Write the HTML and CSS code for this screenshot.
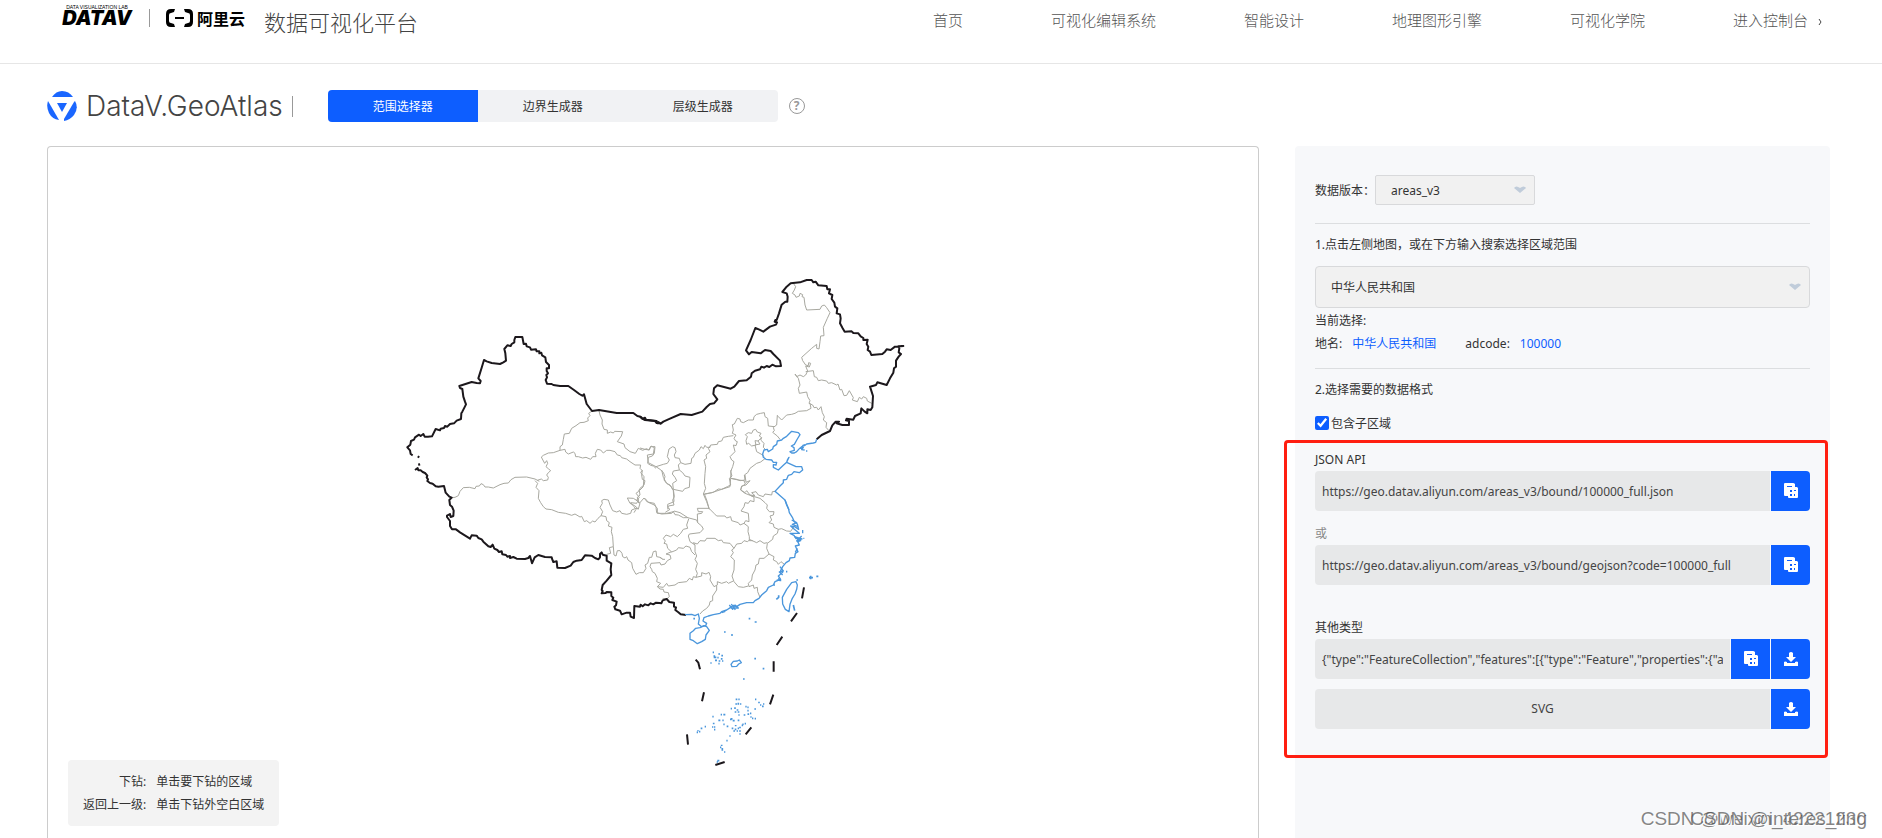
FILE: index.html
```html
<!DOCTYPE html>
<html lang="zh-CN">
<head>
    <meta charset="UTF-8">
    <meta name="viewport" content="width=device-width, initial-scale=1.0">
    <title>DataV.GeoAtlas地理小工具系列</title>
    <link rel="stylesheet" href="styles.css">
</head>
<body>
<header class="site-header">
    <div class="brand">
        <div class="datav-logo">
            <span class="datav-sub">DATA VISUALIZATION LAB</span>
            <span class="datav-name">DATAV</span>
        </div>
        <span class="brand-split"></span>
        <div class="aliyun-logo">
            <svg width="30" height="18" viewBox="0 0 30 18" aria-hidden="true">
                <path d="M10 0H6Q1 0 1 5V13Q1 18 6 18H10L9 15L6 14Q4 14 4 12V6Q4 4 6 4L9 3Z"/>
                <path d="M19 0H23Q28 0 28 5V13Q28 18 23 18H19L20 15L23 14Q25 14 25 12V6Q25 4 23 4L20 3Z"/>
                <path d="M10 8H19V10H10Z"/>
            </svg>
            <span>阿里云</span>
        </div>
        <span class="brand-title">数据可视化平台</span>
    </div>
    <nav class="site-nav">
        <a href="#">首页</a>
        <a href="#">可视化编辑系统</a>
        <a href="#">智能设计</a>
        <a href="#">地理图形引擎</a>
        <a href="#">可视化学院</a>
        <a href="#">进入控制台<svg class="nav-arrow" width="4" height="8" viewBox="0 0 4 8" aria-hidden="true"><path d="M1 1L3 4L1 7"/></svg></a>
    </nav>
</header>

<div class="toolbar">
    <h1 class="product">
        <svg width="30" height="30" viewBox="0 0 30 30" aria-hidden="true">
            <path d="M5 6Q9 0 15 0Q22 0 26 6Z"/>
            <path d="M1 10L12 29Q5 28 2 22Q-1 16 1 10Z"/>
            <path d="M28 10Q32 17 27 24Q23 29 17 30L17 28L27 11Z"/>
            <path d="M10 12H20L15 21Z"/>
        </svg>
        <span>DataV.GeoAtlas</span>
    </h1>
    <div class="tabs">
        <button class="tab active" type="button">范围选择器</button>
        <button class="tab" type="button">边界生成器</button>
        <button class="tab" type="button">层级生成器</button>
    </div>
    <button class="help" type="button" aria-label="帮助">?</button>
</div>

<main class="workspace">
    <section class="map-box">
        <!-- 三倍坐标系，原点为地图左上角 -->
        <svg class="map" viewBox="-6 0 1530 1500" role="img" aria-label="中国地图">
            <!-- 省界 -->
            <g class="province">
                <path d="M576 423L566 430L570 437L563 444L565 452L552 457L540 458L528 467L515 475L508 490L493 492L490 508L487 525L480 530V541"/>
                <path d="M480 541L460 548L445 549L430 556L424 561L427 567L434 580L440 572L443 580L438 590L446 597L452 602L445 608L440 615L445 622L443 630L430 632L424 627L412 631"/>
                <path d="M418 634L405 627L380 621L345 622L333 629L325 639L312 640L300 644L280 654L265 651L255 651L250 644L243 641L238 648L228 649L225 656L208 652L190 653L180 664L175 677L165 682L155 683"/>
                <path d="M480 541L495 538L497 546L505 552L520 546L525 550L527 560L535 560L548 564L558 562L572 568L578 560L588 560L586 550L592 538L602 540L610 549L620 541L630 541L645 545L652 555L661 557L665 563L680 567L690 575L705 585L722 585L720 595L727 602L725 615L727 628L735 632L732 645L720 655L715 665L708 670L718 682L710 690L720 700L715 717"/>
                <path d="M405 632L413 640L408 652L417 662L415 685L422 698L430 710L438 717L455 719L475 727L497 730L515 736L525 732L540 741L545 739L553 755L560 752L570 760L578 753L585 756L594 745L603 737"/>
                <path d="M603 737L608 725L600 712L607 700L605 692L612 688L625 690L630 705L638 722L650 726L660 722L665 730L680 733L692 730L695 720L708 715L715 717L704 707L690 700L682 684L700 685L708 690L718 700L732 684L742 696L763 700L768 712L770 728L785 732L815 730L822 723L840 728L865 744"/>
                <path d="M603 737L618 740L620 752L628 758L625 768L636 772L634 785L638 800L640 830L628 833L632 850L620 853"/>
                <path d="M640 830L642 855L648 858L652 842L660 842L666 850L668 860L675 864L680 860L684 870L695 878L698 895L708 913L718 908L730 908L738 895L735 885L743 880L748 862L755 862L760 845L768 843L770 860L780 862L788 867"/>
                <path d="M597 422L600 435L607 450L606 462L612 478L622 480L622 490L632 486L640 489L644 484L668 485L664 498L652 515L672 522L675 533L690 545L706 550L715 535L728 541L740 536L746 540L752 530L765 530L763 550L757 558L745 562L743 580L752 586L760 588L768 595"/>
            </g>
            <g class="province" transform="translate(720 0)">
                <path d="M460 40L467 50L463 60L457 70L465 75L468 82L478 78L480 70L488 74L486 80L492 82L495 105L500 120L540 118L545 108L553 105L560 113L570 128L562 145L550 172L552 197L542 198L540 215L537 237L530 235L530 223L515 235L485 262L488 272L497 285L505 287L506 278L512 280L508 291L497 288L503 303"/>
                <path d="M497 305L520 302L523 320L530 322L535 332L545 330L560 333L565 340L575 338L590 345L594 342L600 360L605 358L612 377L620 376L628 362L640 383L637 390L652 395L658 382L665 387L670 380L680 385L682 393L695 400"/>
                <path d="M503 303L497 315L490 320L480 315L470 320L465 312L475 325L480 345L475 355L478 370L500 366L503 380L510 392L507 400L518 405L522 413L530 412L535 420L543 410L547 428L553 440L550 450L560 458L558 472L565 480"/>
                <path d="M510 400L513 415L500 422L475 424L465 430L455 433L440 435L425 450L415 440L412 436L410 465L400 472L403 482L398 487L412 498L420 508"/>
                <path d="M403 470L385 468L383 445L375 440L373 428L362 430L350 433L342 440L340 450L325 450L310 458L302 455L300 447L292 445L283 462L277 464L280 480L277 490L288 495L282 505L287 513L292 515L288 527L280 525L285 545L270 560L275 570L282 575L278 590L272 605L276 618L268 625L272 645L262 650L245 658L235 657L220 667L192 673"/>
                <path d="M280 497L265 499L250 502L245 513L235 515L232 523L212 525L208 532L200 532L195 526L190 536L183 530L178 540L165 550L160 562L155 565L153 580L135 583L122 578L118 565L105 563L103 555L108 545L105 533L98 530L87 537L82 560L88 570L82 580L70 583L48 590L25 578L22 555L40 552L43 533L33 528L28 540L15 538L0 534"/>
                <path d="M48 590L60 598L70 607L75 620L72 630L80 640L90 645L98 657"/>
                <path d="M122 578L115 585L118 600L100 603L97 612L105 622L110 632L98 640L100 658L128 664L134 656L148 652L150 622L135 618L128 608L118 600"/>
                <path d="M212 530L205 535L210 545L198 555L200 565L192 570L197 590L195 610L193 640L197 655L190 672L200 695L208 718"/>
                <path d="M272 625L290 628L300 632L315 630L313 615L323 608L330 595L350 580L362 576L375 566"/>
                <path d="M315 615L318 637L330 632L318 645L305 648L302 660L315 668L320 662L330 675L345 677L335 668L348 665L355 675L370 680L375 672L395 675L397 665L407 664"/>
                <path d="M318 512L322 500L316 494L325 488L335 490L340 480L347 478L352 486L363 490L358 498L365 503L354 513L345 512L348 525L335 528L326 520L320 523Z"/>
                <path d="M354 513L360 522L345 525L350 545L368 555L372 560M365 503L362 510L372 520L370 532L378 540"/>
                <path d="M100 658L103 680L98 690L102 705L85 708L83 718"/>
            </g>
            <g class="province" transform="translate(480 600)">
                <path d="M235 90L230 100L212 98L222 110L228 118L222 128M235 90L233 82M255 85L265 97L283 105L292 115V130L320 130L340 125L345 134L355 135L370 143L383 143L410 150L413 158"/>
                <path d="M247 0L242 8L252 20L250 50L238 62L240 75L232 82L237 98"/>
                <path d="M305 0L310 22L320 40L332 48L340 62L342 95L323 103V113L330 118L316 127"/>
                <path d="M447 115L412 115L415 125L428 125L425 130L412 132L413 158L425 168L430 177L420 188L388 192L385 198L390 215L405 225"/>
                <path d="M433 72L440 90L447 115L462 130L470 138L495 138L500 144L512 140L515 152L535 158L540 165L552 160L565 170L564 185L568 200L568 212L578 212"/>
                <path d="M386 147L380 165L383 175L370 178L362 190L352 200L340 193L332 200L318 195L310 205L316 213L312 220L320 222L323 235L335 246L350 240L355 233L370 235L378 228L390 232L395 245L405 255"/>
                <path d="M405 225L400 218L412 222L420 212L435 213L440 205L465 205L475 212L485 210L490 218L510 220L522 235L530 222L545 220L552 212L562 215L570 209L590 218L600 212L612 220L622 218"/>
                <path d="M552 160L557 152L567 155L565 130L543 123L552 110L555 98L565 100L570 92L582 95L582 82L573 77"/>
                <path d="M433 72L455 68L485 58L510 50L512 25L513 0M512 25L535 30L552 32L556 42L545 50L542 60L555 70L573 77"/>
                <path d="M573 77L600 85L615 98L622 105L620 115L628 125L642 125L640 135L630 138L635 150L627 158L640 162L642 172L655 178L665 176L680 183L692 184L705 165"/>
                <path d="M655 178L652 190L640 198L638 208L622 220L620 235L627 252L642 260L640 270L650 275L655 283L663 275L672 282"/>
                <path d="M627 252L612 265L598 265L595 282L588 285L585 300L577 315L575 330L565 340L567 350L580 345L582 355L592 352L593 365L600 382"/>
                <path d="M522 235L515 240L520 248L512 260L523 270L522 300L516 318L522 335L535 350L550 352L565 348"/>
                <path d="M405 225V245L410 258L405 268L412 280L407 298L412 310L408 322L400 320L397 330L388 325L380 335L355 338L345 345L325 348L320 340L310 352L292 350L302 340L290 335L292 325L285 310L277 305L275 298L270 290L273 280L300 278L303 285L315 282L322 272L333 266L330 255L318 252L335 245"/>
                <path d="M408 322L425 318L425 308L438 312L447 307L452 320L450 330L462 350L472 345L472 335L485 340L500 335L505 340L520 333"/>
                <path d="M292 350L300 357L310 358L312 366L325 368L328 380L320 387L308 385"/>
                <path d="M470 347L470 360L458 378L458 392L450 395L448 405L440 415L428 423L420 432"/>
                <path d="M300 262L308 268L315 268"/>
            </g>
            <!-- 国界 -->
            <g class="border">
                <path d="M782 460L772 460L770 453L738 449L735 443L728 446L722 440L712 438L700 429L650 429L597 420L576 423L560 402L552 373L547 377L538 372L522 360L505 348L480 348L460 345L455 342L441 341L437 330L441 322L439 315L444 310L440 303L440 295L447 295V285L438 276L436 262L426 256L424 248L418 250V244L410 244L408 238L393 239L390 232L380 229L378 221L371 222L367 201L346 201L343 210L343 217L335 222L332 228L322 226L313 237L316 250L318 272L310 277L300 282L275 279L260 274L252 270L245 293L235 325L242 333L240 340L230 339L215 336L178 348L180 354L187 357L190 380L195 395L198 403L192 415L187 425L184 430L183 447L170 452L162 460L150 462L142 470L135 468L132 474L122 476L120 481L107 477L96 499L84 500L74 500L70 492L62 498L57 494L45 502L42 509L33 513L31 524L22 532L30 541L32 552L38 556"/>
                <path d="M53 559L58 562M57 580L58 587M45 600L53 594L55 601L62 601L68 606L75 609L82 617L80 622L84 628L82 633L90 639L98 641L107 649L115 650L132 648L137 668L148 680L155 683L148 690L150 705L156 710L161 722L160 738L152 741L150 732L141 737L141 741L150 753L150 768L156 778L168 778L180 787L210 806L215 796L230 797L235 804L245 808L250 815L265 829L272 831L278 824L283 836L292 840L297 846L305 844L307 853L318 855L322 860L330 858V864L340 861L350 866L375 867L385 864L390 858L396 880L404 862L415 855L435 861L455 862L457 869L460 876L470 874L472 893L495 894L512 887L520 876L530 872L545 870L555 856L575 857L585 864L595 868L600 862V852L605 847L608 854L620 857L620 872L634 880L632 898L634 915L620 932L608 945L605 960L608 963L605 970L617 969L620 966L634 967L634 978L640 983L637 990L650 995L648 1006L643 1010L646 1018L660 1022L665 1033L680 1028L690 1028L692 1040L702 1044L703 1008L720 1010L722 1004L728 1009L735 1003L745 1006L752 1000L760 1003L768 998L778 999L784 1000L788 991L800 987L808 996L822 998V1010L828 1012L826 1020L835 1027L842 1033L858 1035"/>
            </g>
            <g class="border" transform="translate(720 0)">
                <path d="M0 440L5 445L15 450L45 453L50 459L55 456L62 461L70 455L90 446L122 432L155 435L187 425L200 411L210 402L222 400L232 388L220 372L222 355L232 346L272 356L283 350L297 333L320 331L333 320L335 310L345 302L360 298L364 290L372 293L380 288L388 291L397 284L408 289L423 288L420 272L400 252L392 243L375 240L362 250L335 246L327 253L318 241L332 210L346 174L358 179L370 185L390 170L408 164L411 157L404 155L406 150L410 150L417 130L425 104L436 95L442 95L443 80L440 70L427 66L440 50L452 40L480 37L500 30L515 30L520 37L527 35L535 46L560 48L562 58L570 58L567 70L577 75L575 87L583 98L585 110L592 115L590 130L600 133L602 145L600 160L608 175L614 185L635 184L640 189L655 190L662 199L670 204V210L683 209L680 222L685 230L683 240L690 245L694 255L727 252L735 245L740 238L752 240L765 230L790 228L775 229L778 235L776 247L783 252L776 260L768 272V290L762 295L760 308L750 325L740 345L712 337L708 345L690 350L699 378L697 412L692 420L682 418V430L674 425L664 415L662 430L645 438L640 449L620 446L618 451L627 453V465L607 465L590 460L597 455L587 455L577 466L570 483L545 495L530 508"/>
            </g>
            <!-- 海岸线与岛屿 -->
            <g class="coast" transform="translate(720 0)">
                <path d="M530 508L527 517L520 519L500 522L495 526L485 530L478 536L470 545L463 549L455 549L450 545L463 541L462 533L454 528L463 523L472 507L480 494L475 488L455 484L440 499L430 505L425 510L412 513L410 523L400 530L398 537L385 545L382 538L372 540L368 552L370 562L378 568L395 570L400 577L410 577L408 585L400 584V592L415 600L430 586L440 577L443 568L447 562L440 577L468 590L485 590L488 600L478 608L462 605L455 613L445 616L440 628L430 630V638L420 648L405 664L435 690L447 720"/>
                <path d="M480 535L490 532L485 539L494 540M500 541V545M487 527L495 524"/>
            </g>
            <g class="coast" transform="translate(480 600)">
                <path d="M675 90L680 105L686 118L688 128L697 142L703 155L712 162L716 178L704 170L692 168L703 178L718 190L690 190L702 196L708 206L722 205L712 212L718 225L706 228L714 245L706 250L704 262L690 264L688 272L678 278L668 290L662 302L668 307L655 318L662 328L645 335L640 345L625 352L620 362L605 375L597 385L585 392L580 398L560 398L540 403L530 410L520 406L512 412L500 420L485 425L480 430L460 434L445 438L432 443L429 453L440 460L437 467L425 470L415 462L418 445L415 432L405 437L395 433L375 434"/>
                <path d="M407 475L420 473L432 467L440 470L448 481L438 495L436 508L425 515L412 521L400 512L390 508V490L400 482Z"/>
                <path d="M695 338L708 335L712 345L710 358L705 372L697 385L690 403L687 425L676 418L668 402L667 382L680 358Z"/>
                <path d="M513 583L520 574L532 573L538 570L544 578L536 582L530 589L516 590Z"/>
                <path d="M695 150L710 158L697 163L714 170M703 200L726 207L710 213L725 198M709 204L722 212L712 216M728 180V190M730 205H733M712 235L706 247M660 290L670 303L658 306L668 315M655 325L662 332L650 330M508 405L518 418L525 405L535 414L512 414M514 402L526 420M485 428L496 424"/>
            </g>
            <g class="islets" transform="translate(480 600)">
                <path d="M747 323H759M752 317V328M769 319H775M649 388L656 382V376M700 405L704 422M566 446H571M584 456H590M492 486H497M513 495H519M583 566H588M608 596H613M549 627H554M400 446H405M709 330H714M678 305H682M640 345H645"/>
                <path d="M458 547H462M461 562H469M465 571H471M475 552H480M476 573H481M486 573H490M484 557H489M451 579H455M475 581H479M485 564V569M463 556V560M472 563H476"/>
                <path d="M527 688H532M535 688H539M535 698V704M526 702H531M540 702H544M512 716H516M525 712V717M524 726H529M533 726H538M530 720H535M535 735H539M556 710H560M562 712H566M562 722H566M570 730H574M565 730V735M585 688H589M597 695V700M600 705H604M609 702H613M606 709H611M583 717H588M576 745H580M584 746H588M551 735H556M571 741H575"/>
                <path d="M457 740H461M482 734H486M490 734H496M475 751H481M487 751H491M461 758V763M456 771H460M462 779H466M462 771H466M490 763H494M500 769H505M510 748H515M518 752H524M515 744V749M533 751H538M547 763H551M554 761H558M527 765V769M515 775H520M524 778H529M533 775H537M520 783H525M530 783H534M540 770V775M540 781V785M538 792H542M545 766H549"/>
                <path d="M434 770H438M422 775H427M410 787H414M417 785H421M414 781V784M508 798H512M499 812H503M480 832H484M485 824V828M487 834V842M492 846H496M472 872H478M470 876H474"/>
            </g>
            <!-- 南海诸岛断续线 -->
            <g class="border" transform="translate(480 600)">
                <path d="M732 352L726 385M711 429L693 454M667 500L650 525M641 574V605M640 674L630 703M574 772L557 793M494 876L466 885M381 793L384 824M432 667L426 694M407 569L415 578L420 598"/>
            </g>
        </svg>
        <dl class="map-tips">
            <dt>下钻:</dt>
            <dd>单击要下钻的区域</dd>
            <dt>返回上一级:</dt>
            <dd>单击下钻外空白区域</dd>
        </dl>
    </section>

    <aside class="panel">
        <div class="version-row">
            <label for="version">数据版本：</label>
            <div class="select-wrap small">
                <select id="version"><option>areas_v3</option></select>
                <svg class="caret" width="12" height="7" viewBox="0 0 12 7" aria-hidden="true"><path d="M0 2Q2 -1 6 2Q10 -1 12 2L6 7Z"/></svg>
            </div>
        </div>

        <div class="step">
            <label class="step-title" for="area">1.点击左侧地图，或在下方输入搜索选择区域范围</label>
            <div class="select-wrap">
                <select id="area"><option>中华人民共和国</option></select>
                <svg class="caret" width="12" height="7" viewBox="0 0 12 7" aria-hidden="true"><path d="M0 2Q2 -1 6 2Q10 -1 12 2L6 7Z"/></svg>
            </div>
            <p class="current">当前选择:</p>
            <p class="current-info">
                <span>地名:</span><a href="#">中华人民共和国</a>
                <span class="adcode">adcode:</span><a href="#">100000</a>
            </p>
        </div>

        <div class="step">
            <p class="step-title">2.选择需要的数据格式</p>
            <div class="check-row">
                <input type="checkbox" id="children" checked>
                <label for="children">包含子区域</label>
            </div>
        </div>

        <div class="exports">
            <label class="field-title" for="api-json">JSON API</label>
            <div class="field">
                <input type="text" id="api-json" value="https://geo.datav.aliyun.com/areas_v3/bound/100000_full.json" readonly>
                <button type="button" aria-label="复制"><svg width="14" height="16" viewBox="0 0 14 16"><use href="#icon-copy"/></svg></button>
            </div>
            <label class="field-title muted" for="api-code">或</label>
            <div class="field">
                <input type="text" id="api-code" value="https://geo.datav.aliyun.com/areas_v3/bound/geojson?code=100000_full" readonly>
                <button type="button" aria-label="复制"><svg width="14" height="16" viewBox="0 0 14 16"><use href="#icon-copy"/></svg></button>
            </div>
            <label class="field-title other" for="geojson">其他类型</label>
            <div class="field">
                <input type="text" id="geojson" value='{"type":"FeatureCollection","features":[{"type":"Feature","properties":{"adcode":110000,"name":"北京市"}}]}' readonly>
                <button type="button" aria-label="复制"><svg width="14" height="16" viewBox="0 0 14 16"><use href="#icon-copy"/></svg></button>
                <button type="button" aria-label="下载"><svg width="14" height="14" viewBox="0 0 14 14"><use href="#icon-download"/></svg></button>
            </div>
            <div class="field">
                <span class="field-name">SVG</span>
                <button type="button" aria-label="下载SVG"><svg width="14" height="14" viewBox="0 0 14 14"><use href="#icon-download"/></svg></button>
            </div>
        </div>
    </aside>
</main>

<div class="watermark">
    <span>CSDN @weixin_42221230</span>
    <span>CSDN @interes_ting</span>
</div>

<svg class="icon-defs" aria-hidden="true">
    <symbol id="icon-copy" viewBox="0 0 14 16">
        <path fill-rule="evenodd" d="M0 1Q0 0 1 0H9Q10 0 11 1V4H13L14 5V14Q14 15 13 15H5Q4 15 4 14V13H1Q0 13 0 12ZM3 3V4H8V3ZM6 7V9H8V7ZM10 7V8H12V7ZM6 11V13H8V11ZM10 11V13H11V11Z"/>
    </symbol>
    <symbol id="icon-download" viewBox="0 0 14 14">
        <path d="M5 1Q7 -1 9 1V5H12L7 10L2 5H5ZM0 10Q1 9 3 10V11H11V10Q13 9 14 10V14H0Z"/>
    </symbol>
</svg>
</body>
</html>
```

FILE: styles.css
```css
* {
    box-sizing: border-box;
}
body {
    font-family: "Noto Sans", "Noto Sans CJK SC", sans-serif;
    font-size: 12px;
    color: #333;
    margin: 0;
    display: flex;
    flex-direction: column;
    height: 100vh;
    overflow: hidden;
    background: #fff;
}
p, h1, dl, dd {
    margin: 0;
}
a {
    text-decoration: none;
}
button, select, input {
    font-family: inherit;
    font-size: inherit;
    color: inherit;
    border: none;
    margin: 0;
    padding: 0;
}
button {
    cursor: pointer;
}

/* 顶部导航 */
.site-header {
    display: flex;
    justify-content: space-between;
    align-items: flex-start;
    height: 64px;
    padding: 4px 60px 0 59px;
    border-bottom: 1px solid #e6e6e6;
}
.brand {
    display: flex;
    align-items: flex-start;
}
.datav-logo {
    display: flex;
    flex-direction: column;
    align-items: center;
    width: 76px;
    color: #000;
}
.datav-sub {
    font: 5px/6px "Liberation Sans", sans-serif;
    white-space: nowrap;
}
.datav-name {
    font: italic 900 20px/16px Inter, sans-serif;
}
.brand-split {
    width: 1px;
    height: 18px;
    margin: 5px 15px 0 14px;
    background: #999;
}
.aliyun-logo {
    display: flex;
    align-items: center;
    gap: 2px;
    height: 18px;
    margin-top: 5px;
    color: #000;
    font: 700 16px/18px "Noto Sans CJK SC", sans-serif;
}
.brand-title {
    margin-left: 19px;
    color: #444;
    font: 300 22px/34px "Noto Sans CJK SC", sans-serif;
}
.site-nav {
    display: flex;
    gap: 88px;
}
.site-nav a {
    color: #555;
    font: 300 15px/32px "Noto Sans CJK SC", sans-serif;
    white-space: nowrap;
}
.nav-arrow {
    margin-left: 10px;
    fill: none;
    stroke: #444;
}

/* 工具栏 */
.toolbar {
    display: flex;
    align-items: center;
    padding: 26px 47px 24px;
}
.product {
    display: flex;
    align-items: center;
    gap: 9px;
    padding-right: 10px;
    margin-right: 35px;
    position: relative;
    color: #444;
    font: 300 28px/32px Inter, sans-serif;
}
.product svg {
    fill: #1a66ff;
}
.product::after {
    content: "";
    position: absolute;
    right: 0;
    top: 6px;
    width: 1px;
    height: 21px;
    background: #999;
}
.tabs {
    display: flex;
    border-radius: 4px;
    overflow: hidden;
    background: #f1f2f4;
}
.tab {
    width: 150px;
    height: 32px;
    background: none;
}
.tab.active {
    color: #fff;
    background: #0d5eff;
}
.help {
    width: 16px;
    height: 16px;
    margin-left: 11px;
    border: 1px solid #999;
    border-radius: 50%;
    background: none;
    color: #999;
    font-size: 12px;
    line-height: 14px;
    font-weight: bold;
}

/* 地图 */
.workspace {
    flex: 1;
    display: flex;
    gap: 36px;
    padding: 0 52px 0 47px;
    min-height: 0;
}
.map-box {
    flex: 1;
    display: flex;
    justify-content: center;
    align-items: flex-start;
    position: relative;
    padding-top: 123px;
    border: 1px solid #ccc;
    border-bottom: none;
    border-radius: 4px 4px 0 0;
}
.map {
    width: 510px;
    fill: none;
    stroke-linejoin: round;
}
.province {
    stroke: #a8a8a0;
    stroke-width: 3;
}
.border {
    stroke: #1c181c;
    stroke-width: 6;
}
.coast {
    stroke: #4a96dc;
    stroke-width: 4;
}
.islets {
    stroke: #4a96dc;
    stroke-width: 5;
}
.map-tips {
    position: absolute;
    left: 20px;
    bottom: 12px;
    display: grid;
    grid-template-columns: auto auto;
    column-gap: 10px;
    padding: 10px 15px;
    border-radius: 4px;
    background: #f3f3f3;
    line-height: 23px;
}
.map-tips dt {
    text-align: right;
}

/* 右侧面板 */
.panel {
    width: 535px;
    padding: 29px 20px 0;
    border-radius: 4px 4px 0 0;
    background: #f7f8fa;
}
.version-row {
    display: flex;
    align-items: center;
    padding-bottom: 18px;
}
.version-row label {
    width: 60px;
    white-space: nowrap;
}
.select-wrap {
    position: relative;
    height: 42px;
}
.select-wrap.small {
    width: 160px;
    height: 30px;
}
.select-wrap select {
    width: 100%;
    height: 100%;
    padding: 0 15px;
    border: 1px solid #d8d9db;
    border-radius: 4px;
    background: #f1f1f1;
    appearance: none;
}
.select-wrap.small select {
    border-radius: 2px;
}
.caret {
    position: absolute;
    right: 9px;
    top: 50%;
    margin-top: -4px;
    fill: #c0ccda;
    pointer-events: none;
}
.step {
    border-top: 1px solid #dcdee0;
}
.step-title {
    display: block;
    padding: 11px 0;
    line-height: 20px;
}
.current {
    padding-top: 1px;
    line-height: 24px;
}
.current-info {
    padding-bottom: 13px;
    line-height: 22px;
}
.current-info a {
    margin-left: 10px;
    color: #0d5eff;
}
.adcode {
    margin-left: 26px;
}
.check-row {
    display: flex;
    align-items: center;
    gap: 2px;
    height: 24px;
}
.check-row input {
    width: 14px;
    height: 14px;
    accent-color: #0d5eff;
}
.exports {
    position: relative;
    padding-top: 15px;
}
.exports::after {
    content: "";
    position: absolute;
    top: 5px;
    right: -18px;
    bottom: -29px;
    left: -31px;
    border: 3px solid #ff1e10;
    border-radius: 4px;
    pointer-events: none;
}
.field-title {
    display: block;
    padding-bottom: 1px;
    line-height: 20px;
}
.field-title.muted {
    margin-top: 13px;
    color: #888;
}
.field-title.other {
    margin-top: 33px;
}
.field {
    display: flex;
    gap: 1px;
    height: 40px;
    border-radius: 4px;
    overflow: hidden;
}
.field + .field {
    margin-top: 10px;
}
.field input, .field-name {
    flex: 1;
    min-width: 0;
    padding: 0 7px;
    background: #e7e8e9;
    color: #444;
}
.field-name {
    line-height: 40px;
    text-align: center;
}
.field button {
    display: flex;
    align-items: center;
    justify-content: center;
    width: 39px;
    background: #0d5eff;
    fill: #fff;
}

/* 水印 */
.watermark {
    position: absolute;
    right: 15px;
    bottom: 8px;
    display: grid;
    justify-items: end;
    color: rgba(80, 80, 80, 0.7);
    font: 19px/22px "Liberation Sans", sans-serif;
    text-shadow: 1px 1px 0 #fff;
}
.watermark span {
    grid-area: 1 / 1;
}
.icon-defs {
    position: absolute;
    width: 0;
    height: 0;
}
```
